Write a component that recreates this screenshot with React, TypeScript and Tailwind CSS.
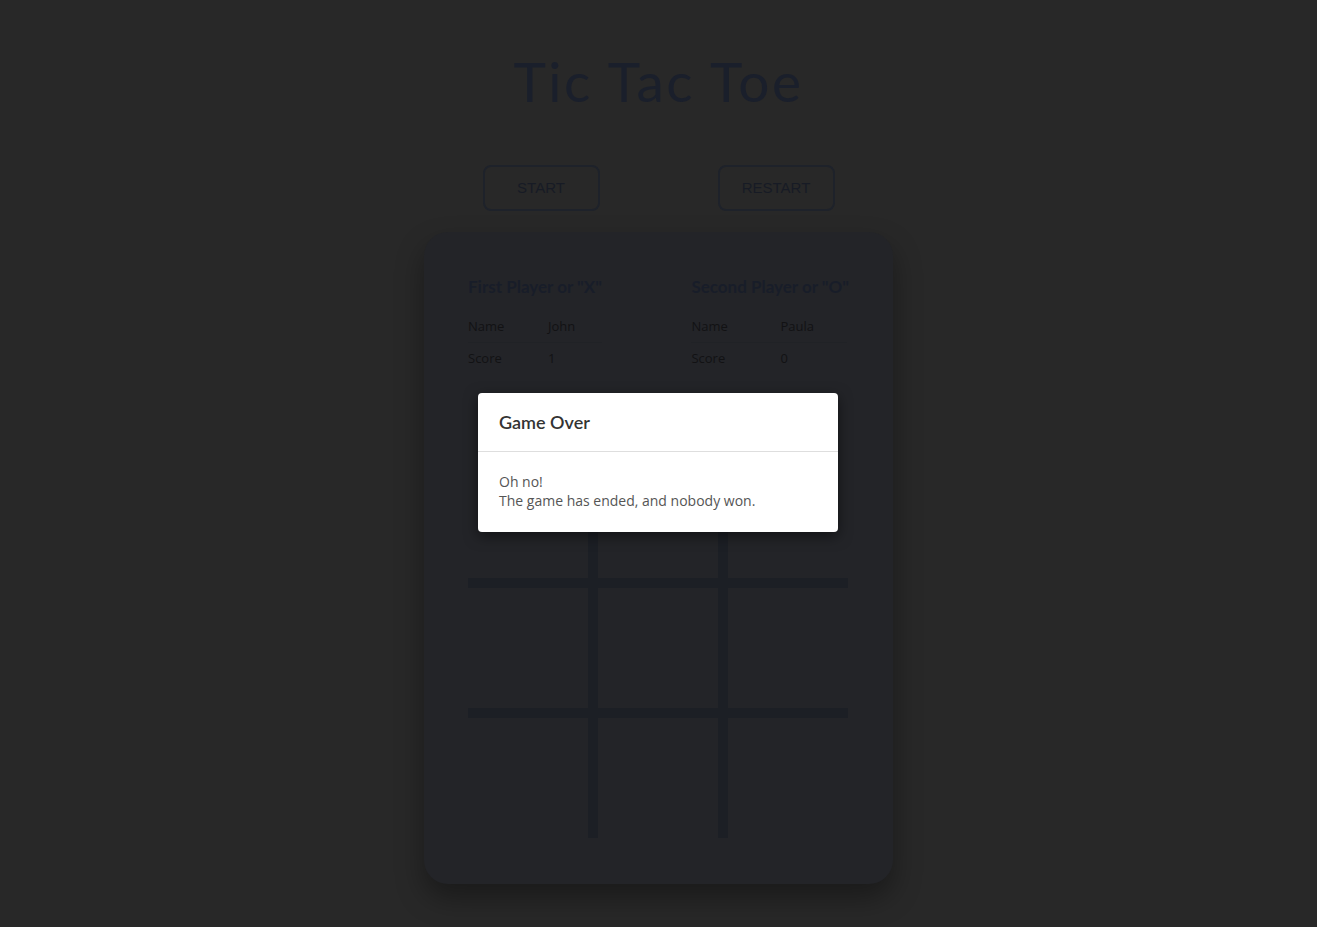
import React from "react";

export default function App() {
  return (
    <div className="relative min-h-[927px] w-full overflow-hidden bg-[#282828] font-['Lato',sans-serif]">
      <div className="flex flex-col items-center">
        <h1 className="mt-[51px] text-[55px] font-normal leading-[60px] tracking-[2.5px] text-[#1a1f2b] font-['Lato',sans-serif]">
          Tic Tac Toe
        </h1>
        <div className="mt-[54px] flex w-[352px] justify-between">
          <button className="h-[46px] w-[117px] rounded-[8px] border-2 border-[#1e222a] text-[15px] text-[#171b25] font-['Liberation_Sans',sans-serif]">
            START
          </button>
          <button className="h-[46px] w-[117px] rounded-[8px] border-2 border-[#1e222a] text-[15px] text-[#171b25] font-['Liberation_Sans',sans-serif]">
            RESTART
          </button>
        </div>
        <div className="mt-[21px] w-[469px] rounded-[24px] bg-[#232428] px-[44px] pb-[46px] pt-[44px] shadow-[0_14px_28px_rgba(0,0,0,0.35)]">
          <div className="flex justify-between">
            <PlayerTable title={'First Player or "X"'} name="John" score="1" labelW="w-[80px]" width="w-[134px]" />
            <PlayerTable title={'Second Player or "O"'} name="Paula" score="0" labelW="w-[89px]" width="w-[156px]" />
          </div>
          <div className="mt-[83px] grid grid-cols-[120px_10px_120px_10px_120px] grid-rows-[120px_10px_120px_10px_120px]">
            {Array.from({ length: 25 }).map((_, i) => {
              const r = Math.floor(i / 5);
              const c = i % 5;
              const isLine = r % 2 === 1 || c % 2 === 1;
              return (
                <div
                  key={i}
                  className={isLine ? "bg-[#1c1f25]" : "bg-transparent"}
                />
              );
            })}
          </div>
        </div>
      </div>

      <div className="absolute left-[478px] top-[393px] w-[360px] rounded-[4px] bg-white shadow-[0_4px_14px_rgba(0,0,0,0.5)]">
        <div className="border-b border-[#dedede] px-[21px] pb-[17px] pt-[17px]">
          <h2 className="text-[18px] font-semibold leading-[24px] text-[#333333] font-['Lato',sans-serif]">Game Over</h2>
        </div>
        <div className="px-[21px] pb-[22px] pt-[20px] text-[14px] leading-[19px] text-[#555555] font-['Open_Sans',sans-serif]">
          <p>Oh no!</p>
          <p>The game has ended, and nobody won.</p>
        </div>
      </div>
    </div>
  );
}

function PlayerTable({
  title,
  name,
  score,
  labelW,
  width,
}: {
  title: string;
  name: string;
  score: string;
  labelW: string;
  width: string;
}) {
  return (
    <div>
      <h3 className="text-[17px] font-bold leading-[22px] text-[#181d29] font-['Lato',sans-serif]">{title}</h3>
      <div className={`mt-[13px] ${width} text-[13px] text-[#121214] font-['Open_Sans',sans-serif]`}>
        <div className="flex h-[32px] items-center border-b border-[#202226]">
          <span className={labelW}>Name</span>
          <span>{name}</span>
        </div>
        <div className="flex h-[32px] items-center">
          <span className={labelW}>Score</span>
          <span>{score}</span>
        </div>
      </div>
    </div>
  );
}
